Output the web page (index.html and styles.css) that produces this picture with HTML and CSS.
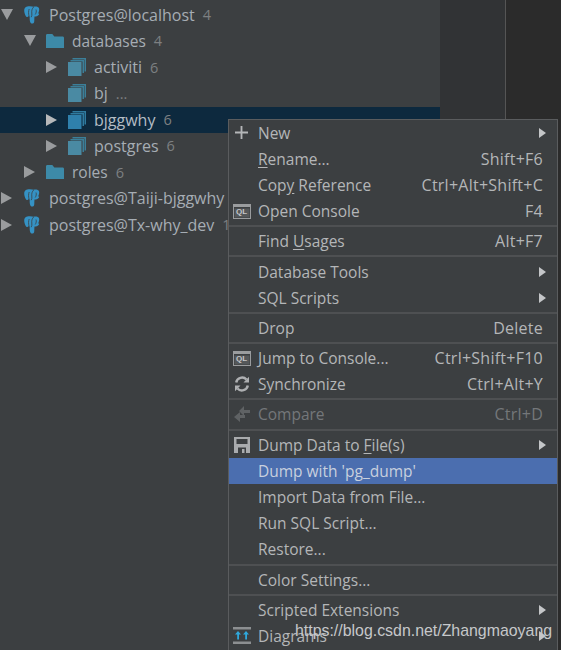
FILE: index.html
```html
<!DOCTYPE html>
<html lang="en">
<head>
<meta charset="utf-8">
<title>Database tree context menu</title>
<link rel="stylesheet" href="styles.css">
</head>
<body>
<svg class="defs" width="0" height="0" aria-hidden="true">
  <defs>
    <symbol id="pg" viewBox="0 0 16 18">
      <path fill="#3592c4" d="M3.200 0.600C1.200 0.900 0 2.600 0.200 5c.2 2.200 1.200 5.200 2.400 5.900.8.400 1.400-.3 1.900-1 .5.300 1 .5 1.300.5-.2 1.400-.1 3.600.2 5 .3 1.500 1.500 2.600 3 2 1.200-.5 1.300-1.700 1.300-3.200 0-1.200.1-2.600.2-3.600 1.600 0 3.400-.6 4.500-2.200.5-.8-.1-1-.9-.8 1-2.300 1.600-4.500.7-5.900C13.300.2 11.200.2 9.700.8 8 .2 5.200 0 3.200.6z"/>
      <path fill="none" stroke="#3c3f41" stroke-width=".8" d="M5 10c-.6-2.300-.6-5 .2-7M9.700 1c-1.700 1.500-2.200 3.800-1.900 6 .2 1.600.1 3.300-.6 4.200M12 3.500c.6 1.700.2 3.600-.8 5"/>
    </symbol>
    <symbol id="folder" viewBox="0 0 18 14">
      <path fill="#3d8aa8" d="M0 1.500C0 .7.500 0 1.300 0h5l2 2.400h8.300c.8 0 1.400.6 1.400 1.400V14H0z"/>
    </symbol>
    <symbol id="db" viewBox="0 0 18 18">
      <path fill="#3b7f99" d="M4.500 0H18v13.500h-1.500V1.500H4.500z"/>
      <path fill="#3b7f99" d="M2.500 2H16v13h-1.500V3.500H2.500z"/>
      <rect fill="#4a8aa3" y="4" width="13.500" height="14"/>
    </symbol>
    <symbol id="db-sel" viewBox="0 0 18 18">
      <path fill="#2f7ba0" d="M4.500 0H18v13.500h-1.500V1.500H4.500z"/>
      <path fill="#2f7ba0" d="M2.500 2H16v13h-1.500V3.500H2.500z"/>
      <rect fill="#2f80ac" y="4" width="13.500" height="14"/>
    </symbol>
    <symbol id="ql" viewBox="0 0 18 15">
      <rect x=".5" y=".5" width="17" height="14" fill="#3c3f41" stroke="#9a9c9e"/>
      <rect width="18" height="3" fill="#9a9c9e"/>
      <rect x="1.500" y="4.500" width="15" height="9" fill="#55585a"/>
    </symbol>
  </defs>
</svg>

<main class="window">
  <section class="tree">
    <div class="row"><span class="arrow down"></span><svg class="i-pg"><use href="#pg"/></svg><span class="name">Postgres@localhost</span><span class="count">4</span></div>
    <div class="row l1"><span class="arrow down"></span><svg class="i-folder"><use href="#folder"/></svg><span class="name">databases</span><span class="count">4</span></div>
    <div class="row l2"><span class="arrow right"></span><svg class="i-db"><use href="#db"/></svg><span class="name">activiti</span><span class="count">6</span></div>
    <div class="row l2"><span class="arrow none"></span><svg class="i-db"><use href="#db"/></svg><span class="name">bj</span><span class="count">...</span></div>
    <div class="row l2 selected"><span class="arrow right"></span><svg class="i-db"><use href="#db-sel"/></svg><span class="name">bjggwhy</span><span class="count">6</span></div>
    <div class="row l2"><span class="arrow right"></span><svg class="i-db"><use href="#db"/></svg><span class="name">postgres</span><span class="count">6</span></div>
    <div class="row l1"><span class="arrow right"></span><svg class="i-folder"><use href="#folder"/></svg><span class="name">roles</span><span class="count">6</span></div>
    <div class="row"><span class="arrow right"></span><svg class="i-pg"><use href="#pg"/></svg><span class="name">postgres@Taiji-bjggwhy</span></div>
    <div class="row"><span class="arrow right"></span><svg class="i-pg"><use href="#pg"/></svg><span class="name">postgres@Tx-why_dev</span><span class="count">1</span></div>
  </section>
  <div class="gutter"></div>
  <div class="editor"></div>
</main>

<nav class="menu">
  <div class="item"><span class="ico"><svg class="plus" viewBox="0 0 14 14"><path d="M6 0h2v6h6v2H8v6H6V8H0V6h6z"/></svg></span><span class="label">New</span><span class="sub"></span></div>
  <div class="item"><span class="ico"></span><span class="label"><u>R</u>ename...</span><span class="key">Shift+F6</span></div>
  <div class="item"><span class="ico"></span><span class="label">Cop<u>y</u> Reference</span><span class="key">Ctrl+Alt+Shift+C</span></div>
  <div class="item"><span class="ico"><span class="ql"><svg><use href="#ql"/></svg><b>QL</b></span></span><span class="label">Open Console</span><span class="key">F4</span></div>
  <div class="sep"></div>
  <div class="item"><span class="ico"></span><span class="label">Find <u>U</u>sages</span><span class="key">Alt+F7</span></div>
  <div class="sep"></div>
  <div class="item"><span class="ico"></span><span class="label">Database Tools</span><span class="sub"></span></div>
  <div class="item"><span class="ico"></span><span class="label">SQL Scripts</span><span class="sub"></span></div>
  <div class="sep"></div>
  <div class="item"><span class="ico"></span><span class="label">Drop</span><span class="key">Delete</span></div>
  <div class="sep"></div>
  <div class="item"><span class="ico"><span class="ql"><svg><use href="#ql"/></svg><b>QL</b></span></span><span class="label">Jump to Console...</span><span class="key">Ctrl+Shift+F10</span></div>
  <div class="item"><span class="ico"><svg class="sync" viewBox="0 0 16 16"><path fill="none" stroke="#aeb0b2" stroke-width="2.400" d="M2.200 6.500A6 6 0 0 1 12.500 3.500M13.800 9.500A6 6 0 0 1 3.500 12.500"/><path fill="#aeb0b2" d="M15 .8V6.500H9.500zM1 15.200V9.500h5.500z"/></svg></span><span class="label">Synchronize</span><span class="key">Ctrl+Alt+Y</span></div>
  <div class="sep"></div>
  <div class="item disabled"><span class="ico"><svg class="cmp" viewBox="0 0 18 16"><path fill="#5f6264" d="M11 0v4h6v3h-6v3L6 5zM7 6v3h5v3H7v4L1 11z"/></svg></span><span class="label">Compare</span><span class="key">Ctrl+D</span></div>
  <div class="sep"></div>
  <div class="item"><span class="ico"><svg class="save" viewBox="0 0 16 16"><path fill="#a9abad" d="M0 0h16v16H0z"/><path fill="#3c3f41" d="M2.500 2h11v5h-11zM4 10.500h8V16H4z"/><path fill="#a9abad" d="M8 12h2.500v4H8z"/></svg></span><span class="label">Dump Data to <u>F</u>ile(s)</span><span class="sub"></span></div>
  <div class="item active"><span class="ico"></span><span class="label">Dump with 'pg_dump'</span></div>
  <div class="item"><span class="ico"></span><span class="label">Import Data from File...</span></div>
  <div class="item"><span class="ico"></span><span class="label">Run SQL Script...</span></div>
  <div class="item"><span class="ico"></span><span class="label">Restore...</span></div>
  <div class="sep"></div>
  <div class="item"><span class="ico"></span><span class="label">Color Settings...</span></div>
  <div class="sep"></div>
  <div class="item"><span class="ico"></span><span class="label">Scripted Extensions</span><span class="sub"></span></div>
  <div class="item"><span class="ico"><svg class="diag" viewBox="0 0 18 17"><path fill="#8c8f91" d="M0 0h18v2.500H0zM0 14.500h18V17H0z"/><path fill="#2fa8dc" d="M5 4l3 3.500H6v5H4.200v-5H2zM13 4l3 3.500h-2v5h-1.800v-5H10z"/></svg></span><span class="label">Diagrams</span><span class="sub"></span></div>
</nav>
<div class="mark">https://blog.csdn.net/Zhangmaoyang</div>
</body>
</html>
```
FILE: styles.css
```css
html, body {
  margin: 0;
  padding: 0;
  height: 650px;
  overflow: hidden;
  background: #2b2b2b;
}
body {
  position: relative;
  font-family: "Open Sans", "Noto Sans", sans-serif;
  font-size: 15.500px;
  color: #b4b6b8;
}
.defs { position: absolute; }
.window { display: flex; height: 650px; }
.tree { width: 440px; flex: none; background: #3c3f41; padding-top: 1.500px; box-sizing: border-box; }
.gutter { width: 65px; flex: none; background: #313335; border-right: 1px solid #555; }
.editor { flex: 1; background: #2b2b2b; }

.row {
  display: flex;
  align-items: center;
  height: 26.250px;
  white-space: nowrap;
  padding-left: 1px;
}
.row.l1 { padding-left: 24px; }
.row.l2 { padding-left: 46px; }
.row.selected { background: #0d293e; }
.arrow { width: 11px; height: 12px; flex: none; margin-right: 12px; position: relative; }
.arrow.right { border-left: 11px solid #9a9c9e; border-top: 6px solid transparent; border-bottom: 6px solid transparent; width: 0; height: 0; }
.arrow.down { border-top: 11px solid #9a9c9e; border-left: 6px solid transparent; border-right: 6px solid transparent; width: 0; height: 0; margin-right: 11px; }
.selected .arrow.right { border-left-color: #b6b8ba; }
.i-pg { width: 16px; height: 18px; flex: none; margin-right: 9px; }
.i-folder { width: 18px; height: 14px; flex: none; margin-right: 8px; margin-left: -1px; }
.i-db { width: 18px; height: 18px; flex: none; margin-right: 8px; margin-left: -1px; }
.name { margin-right: 8px; color: #a6adb4; font-size: 16px; }
.l1 .name { font-size: 15.500px; }
.selected .name { color: #b4bcc4; }
.count { color: #7d8082; font-size: 14.500px; }

.menu {
  position: absolute;
  left: 228px;
  top: 119px;
  width: 330px;
  height: 531px;
  box-sizing: border-box;
  background: #3c3f41;
  border: 1px solid #5a5c5e;
  border-bottom: 0;
}
.item {
  display: flex;
  align-items: center;
  height: 26.200px;
  white-space: nowrap;
  padding-right: 14px;
}
.item:first-child { margin-top: -0.500px; }
.ico { width: 24px; flex: none; display: flex; align-items: center; padding-left: 4px; margin-right: 1px; }
.label { flex: 1; }
.key { color: #b4b6b8; font-size: 16px; letter-spacing: .25px; }
.sub { width: 0; height: 0; border-left: 7px solid #c4c6c8; border-top: 5.500px solid transparent; border-bottom: 5.500px solid transparent; margin-right: -3px; }
.sep { height: 2px; margin: 1px 0; background: #4e5052; }
.active { background: #4b6eaf; color: #c8d0de; }
.disabled, .disabled .key { color: #74777a; }
u { text-underline-offset: 2px; }

.plus { width: 13px; height: 13px; fill: #b4b6b8; margin-left: 2px; }
.ql { position: relative; width: 18px; height: 15px; display: block; }
.ql svg { width: 18px; height: 15px; display: block; }
.ql b { position: absolute; left: 3px; top: 3.500px; font: bold 8px/10px "Liberation Sans", sans-serif; color: #c4c6c8; }
.sync { width: 16px; height: 16px; margin-left: 1px; }
.cmp { width: 18px; height: 16px; }
.save { width: 16px; height: 16px; margin-left: 1px; }
.diag { width: 18px; height: 17px; }

.mark {
  position: absolute;
  left: 295px;
  top: 622px;
  font: 15.900px/18px "Liberation Sans", sans-serif;
  color: #c6c8ca;
  white-space: nowrap;
}
```
